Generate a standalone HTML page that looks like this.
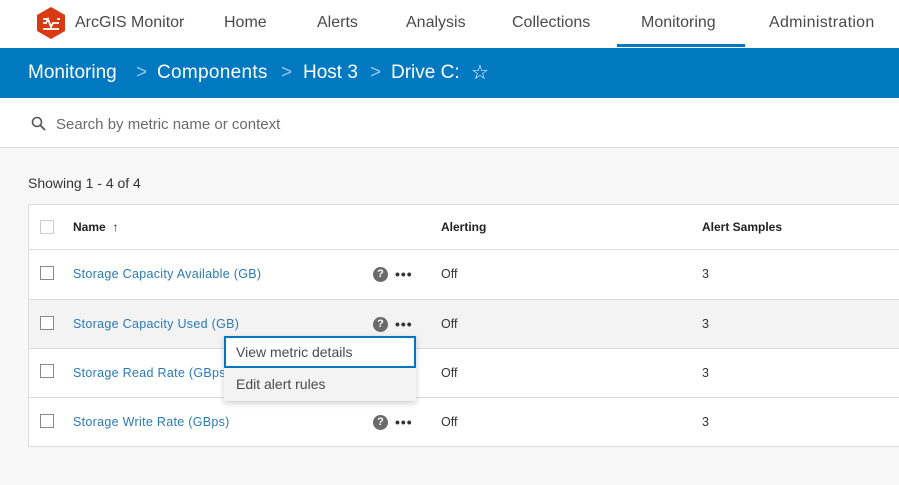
<!DOCTYPE html>
<html><head><style>
*{margin:0;padding:0;box-sizing:border-box}
body{width:899px;height:485px;overflow:hidden;background:#f8f8f8;font-family:"Liberation Sans",sans-serif;position:relative}
.a{position:absolute;white-space:nowrap}
.nav{height:48px;background:#fff}
.nav span{position:absolute;top:14px;font-size:16px;color:#4a4a4a}
.bar{position:absolute;top:48px;left:0;width:899px;height:50px;background:#0079c1;color:#fff;font-size:19px}
.srch{position:absolute;top:98px;left:0;width:899px;height:50px;background:#fff;border-bottom:1px solid #ddd}
.tbl{position:absolute;left:28px;top:204px;width:880px;height:243px;background:#fff;border:1px solid #dcdcdc}
.row{position:absolute;left:0;width:880px;border-top:1px solid #dcdcdc;font-size:12.5px}
.cb{position:absolute;left:11px;width:14px;height:14px;border:1px solid #888;background:#fff}
.lnk{position:absolute;left:44px;color:#2a7ab9;letter-spacing:0.3px}
.q{position:absolute;left:344px;width:15px;height:15px;border-radius:50%;background:#6a6a6a;color:#fff;font-size:11px;font-weight:bold;text-align:center;line-height:15px}
.d{position:absolute;left:366px;font-size:14px;font-weight:bold;color:#333;letter-spacing:1px}
.off{position:absolute;left:412px;color:#333}
.n{position:absolute;left:673px;color:#333}
.ch{color:#9cc6e4;font-weight:300}
</style></head><body>
<div class="nav">
<svg class="a" style="left:36px;top:7px" width="30" height="32" viewBox="0 0 30 32"><polygon points="15,0 29,8 29,24 15,32 1,24 1,8" fill="#d83a14"/><path d="M7 12h4M7 16h3l2-4 3 8 2-4h6M7 22h16M21 12h3" stroke="#fff" stroke-width="1.8" fill="none"/></svg>
<span style="left:75px;color:#4a4a4a">ArcGIS Monitor</span>
<span style="left:224px">Home</span>
<span style="left:317px">Alerts</span>
<span style="left:406px">Analysis</span>
<span style="left:512px">Collections</span>
<span style="left:641px">Monitoring</span>
<span style="left:769px;letter-spacing:0.3px">Administration</span>
<div class="a" style="left:617px;top:44px;width:128px;height:3px;background:#0079c1"></div>
</div>
<div class="bar">
<span class="a" style="left:28px;top:14px">Monitoring</span>
<span class="a ch" style="left:136px;top:14px">&gt;</span>
<span class="a" style="left:157px;top:14px;letter-spacing:0.3px">Components</span>
<span class="a ch" style="left:281px;top:14px">&gt;</span>
<span class="a" style="left:303px;top:14px">Host 3</span>
<span class="a ch" style="left:370px;top:14px">&gt;</span>
<span class="a" style="left:391px;top:14px">Drive C:</span>
<span class="a" style="left:471px;top:12px;font-size:20px">☆</span>
</div>
<div class="srch">
<svg class="a" style="left:31px;top:18px" width="16" height="16" viewBox="0 0 16 16"><circle cx="6" cy="6" r="4.5" stroke="#555" stroke-width="1.6" fill="none"/><path d="M9.5 9.5L14 14" stroke="#555" stroke-width="1.8"/></svg>
<span class="a" style="left:56px;top:18px;font-size:15px;color:#6a6a6a">Search by metric name or context</span>
</div>
<span class="a" style="left:28px;top:175px;font-size:14px;color:#333">Showing 1 - 4 of 4</span>
<div class="tbl">
<div class="cb" style="top:15px;border-color:#ccc"></div>
<span class="a" style="left:44px;top:15px;font-size:12px;font-weight:bold;color:#222">Name &nbsp;<span style="font-weight:normal">↑</span></span>
<span class="a" style="left:412px;top:15px;font-size:12px;font-weight:bold;color:#222">Alerting</span>
<span class="a" style="left:673px;top:15px;font-size:12px;font-weight:bold;color:#222">Alert Samples</span>
<div class="row" style="top:44px;height:50px"><div class="cb" style="top:16px"></div><span class="lnk" style="top:17px">Storage Capacity Available (GB)</span><div class="q" style="top:17px">?</div><span class="d" style="top:16px">•••</span><span class="off" style="top:17px">Off</span><span class="n" style="top:17px">3</span></div>
<div class="row" style="top:94px;height:49px;background:#f3f3f3"><div class="cb" style="top:16px"></div><span class="lnk" style="top:17px">Storage Capacity Used (GB)</span><div class="q" style="top:17px">?</div><span class="d" style="top:16px">•••</span><span class="off" style="top:17px">Off</span><span class="n" style="top:17px">3</span></div>
<div class="row" style="top:143px;height:49px"><div class="cb" style="top:15px"></div><span class="lnk" style="top:17px">Storage Read Rate (GBps)</span><span class="off" style="top:17px">Off</span><span class="n" style="top:17px">3</span></div>
<div class="row" style="top:192px;height:50px"><div class="cb" style="top:16px"></div><span class="lnk" style="top:17px">Storage Write Rate (GBps)</span><div class="q" style="top:17px">?</div><span class="d" style="top:16px">•••</span><span class="off" style="top:17px">Off</span><span class="n" style="top:17px">3</span></div>
</div>
<div class="a" style="left:224px;top:336px;width:192px;height:65px;background:#f3f3f3;box-shadow:0 2px 6px rgba(0,0,0,.2)">
<div class="a" style="left:0;top:0;width:192px;height:32px;background:#fff;border:2px solid #0079c1"></div>
<span class="a" style="left:12px;top:8px;font-size:14px;color:#4a4a4a">View metric details</span>
<span class="a" style="left:12px;top:40px;font-size:14px;color:#4a4a4a">Edit alert rules</span>
</div>
</body></html>
